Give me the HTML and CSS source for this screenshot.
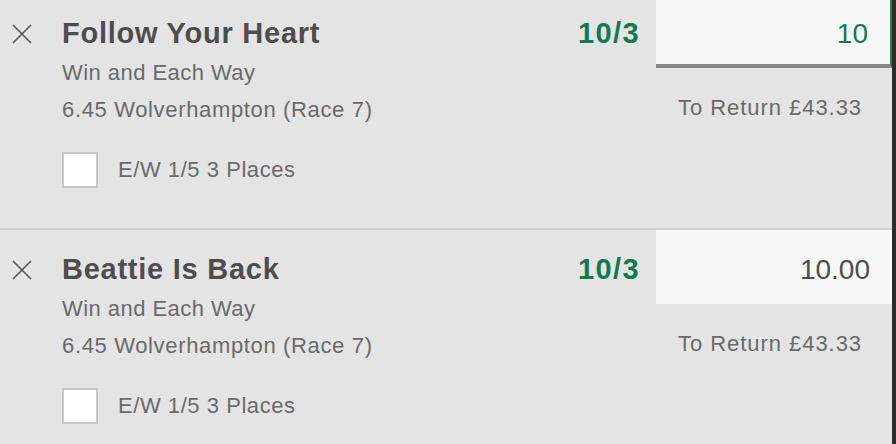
FILE: index.html
```html
<!DOCTYPE html>
<html lang="en">
<head>
<meta charset="utf-8">
<title>Bet slip</title>
<link rel="stylesheet" href="styles.css">
</head>
<body>
<div class="frame">
  <div class="list">
    <div class="card">
      <div class="close">
        <svg class="x-icon" width="20" height="20" viewBox="0 0 20 20"><path d="M1 1 L19 19 M19 1 L1 19" stroke="#555" stroke-width="1.6" fill="none"/></svg>
      </div>
      <div class="main">
        <div class="title">Follow Your Heart</div>
        <div class="sub">Win and Each Way</div>
        <div class="sub event">6.45 Wolverhampton (Race 7)</div>
        <div class="ew">
          <span class="box"></span>
          <span class="ew-label">E/W 1/5 3 Places</span>
        </div>
      </div>
      <div class="odds">10/3</div>
      <div class="stake-col">
        <div class="stake focused">10</div>
        <div class="return">To Return £43.33</div>
      </div>
    </div>
    <div class="card">
      <div class="close">
        <svg class="x-icon" width="20" height="20" viewBox="0 0 20 20"><path d="M1 1 L19 19 M19 1 L1 19" stroke="#555" stroke-width="1.6" fill="none"/></svg>
      </div>
      <div class="main">
        <div class="title">Beattie Is Back</div>
        <div class="sub">Win and Each Way</div>
        <div class="sub event">6.45 Wolverhampton (Race 7)</div>
        <div class="ew">
          <span class="box"></span>
          <span class="ew-label">E/W 1/5 3 Places</span>
        </div>
      </div>
      <div class="odds">10/3</div>
      <div class="stake-col">
        <div class="stake">10.00</div>
        <div class="return">To Return £43.33</div>
      </div>
    </div>
  </div>
  <div class="edge"></div>
</div>
</body>
</html>
```

FILE: styles.css
```css
html, body {
  margin: 0;
  padding: 0;
  height: 100%;
  overflow: hidden;
}
body {
  background: #e4e4e4;
  font-family: "Liberation Sans", Arial, sans-serif;
}
.frame {
  display: flex;
  height: 444px;
}
.list {
  flex: 1;
  margin-top: -6px;
}
.edge {
  width: 4px;
  background: #2b2b2b;
}
.card {
  display: flex;
  border-bottom: 2px solid #d0d0d0;
  height: 236px;
  box-sizing: border-box;
}
.close {
  width: 62px;
  padding: 30px 0 0 12px;
  box-sizing: border-box;
}
.x-icon {
  display: block;
}
.main {
  flex: 1;
  padding-top: 21px;
}
.title {
  font-size: 29px;
  line-height: 36px;
  font-weight: bold;
  color: #4d4d4d;
  letter-spacing: 0.75px;
  margin-bottom: 3px;
}
.sub {
  font-size: 22px;
  line-height: 37px;
  color: #6a6a6a;
  letter-spacing: 0.45px;
}
.sub.event {
  letter-spacing: 0.65px;
}
.ew {
  display: flex;
  align-items: center;
  margin-top: 24px;
  gap: 20px;
}
.box {
  width: 36px;
  height: 36px;
  box-sizing: border-box;
  border: 2px solid #c6c6c6;
  background: #ffffff;
}
.ew-label {
  font-size: 22px;
  color: #6a6a6a;
  letter-spacing: 0.55px;
}
.odds {
  padding-top: 21px;
  padding-right: 16px;
  font-size: 29px;
  line-height: 36px;
  font-weight: bold;
  color: #137a50;
  letter-spacing: 1.4px;
}
.stake-col {
  width: 236px;
  display: flex;
  flex-direction: column;
}
.stake {
  height: 74px;
  box-sizing: border-box;
  background: #f8f8f8;
  padding: 21px 22px 0 0;
  text-align: right;
  font-size: 28px;
  line-height: 37px;
  color: #4d4d4d;
}
.stake.focused {
  color: #137a50;
  border-bottom: 4px solid #888888;
  border-right: 2px solid #2a7a58;
}
.return {
  margin-top: 21px;
  padding-right: 30px;
  text-align: right;
  font-size: 22px;
  line-height: 37px;
  color: #6a6a6a;
  letter-spacing: 0.95px;
}
```
